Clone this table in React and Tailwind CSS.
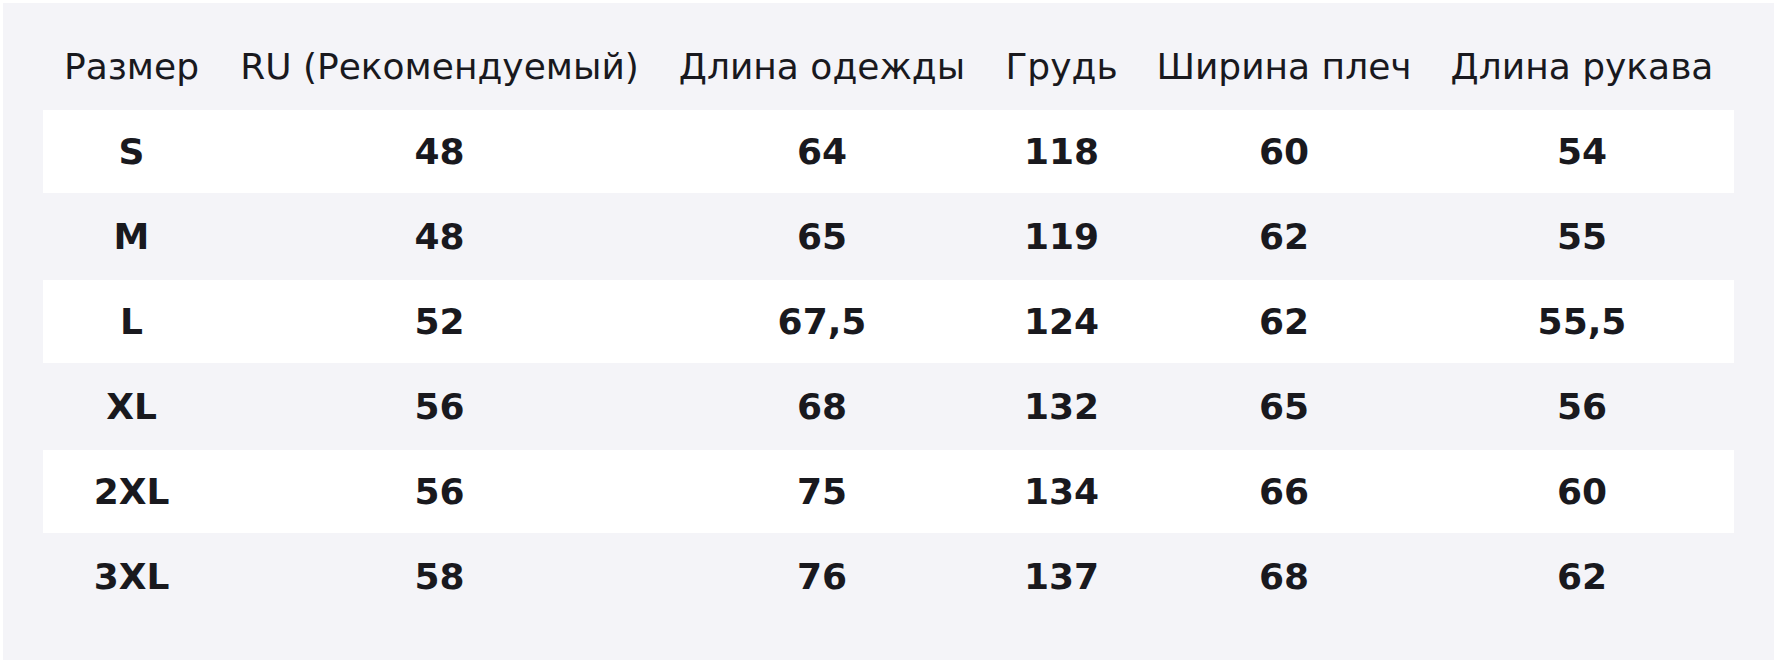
import React from "react";

const headers = ["Размер", "RU (Рекомендуемый)", "Длина одежды", "Грудь", "Ширина плеч", "Длина рукава"];

const rows = [
  ["S", "48", "64", "118", "60", "54"],
  ["M", "48", "65", "119", "62", "55"],
  ["L", "52", "67,5", "124", "62", "55,5"],
  ["XL", "56", "68", "132", "65", "56"],
  ["2XL", "56", "75", "134", "66", "60"],
  ["3XL", "58", "76", "137", "68", "62"],
];

const cols = "grid grid-cols-[177px_439px_326px_153px_292px_304px]";

export default function App() {
  return (
    <div className="bg-white p-[3px] w-[1777px] h-[663px]" style={{ fontFamily: "'DejaVu Sans', sans-serif" }}>
      <div className="bg-[#f4f4f8] h-[657px] w-[1771px] pt-[21px] px-[40px] text-[#19191e]">
        <div className={`${cols} h-[85px] items-center text-[36px]`}>
          {headers.map(h => (
            <div key={h} className="text-center whitespace-nowrap">{h}</div>
          ))}
        </div>
        {rows.map((r, i) => (
          <div key={r[0]} className="border-y border-[#f4f4f8]">
            <div className={`${cols} h-[83px] items-center text-[36px] font-bold ${i % 2 === 0 ? "bg-white" : ""}`}>
              {r.map((c, j) => (
                <div key={j} className="text-center">{c}</div>
              ))}
            </div>
          </div>
        ))}
      </div>
    </div>
  );
}
